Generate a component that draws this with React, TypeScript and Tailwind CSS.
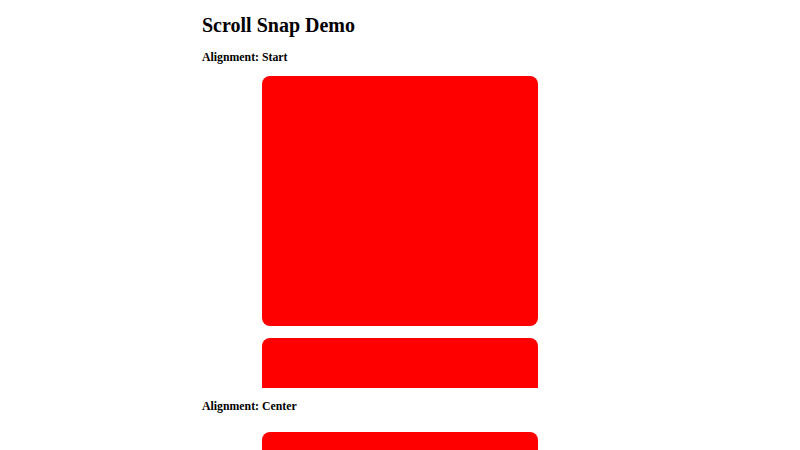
import React from "react";

const Card: React.FC = () => (
  <div className="mx-auto h-[250px] w-[276px] shrink-0 snap-start rounded-lg bg-[#ff0000]" />
);

export default function App() {
  return (
    <div className="min-h-[450px] bg-white font-['Liberation_Serif',serif] text-black">
      <div className="mx-auto w-[396px] pt-[14px]">
        <h2 className="mb-[13px] text-[20px] font-bold leading-[23px]">Scroll Snap Demo</h2>
        <div className="flex flex-col gap-[11px]">
          <div className="flex flex-col">
            <h5 className="text-[11.8px] font-bold leading-[14px]">Alignment: Start</h5>
            <div className="mt-3 h-[312px] overflow-hidden">
              <div className="flex snap-y flex-col gap-3">
                <Card />
                <Card />
                <Card />
              </div>
            </div>
          </div>
          <div className="flex flex-col">
            <h5 className="text-[11.8px] font-bold leading-[14px]">Alignment: Center</h5>
            <div className="mt-[19px] h-[312px] overflow-hidden">
              <div className="flex snap-y flex-col gap-3">
                <Card />
                <Card />
              </div>
            </div>
          </div>
        </div>
      </div>
    </div>
  );
}
